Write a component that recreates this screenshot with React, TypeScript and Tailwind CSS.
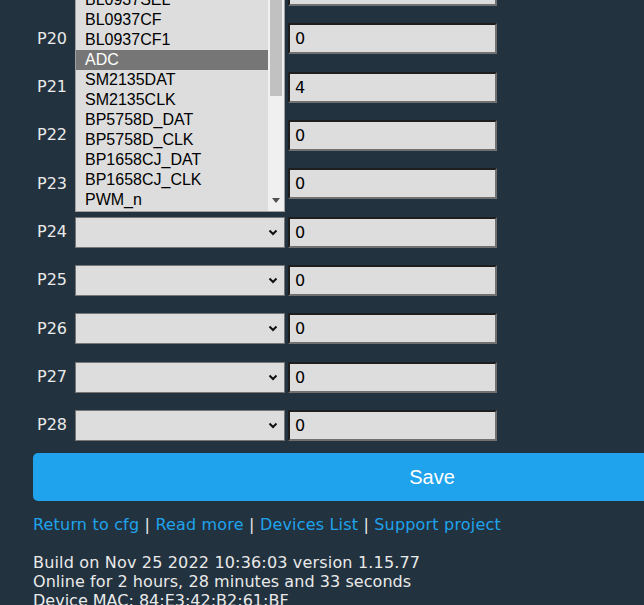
import { useState } from "react";

const pins = ["P19", "P20", "P21", "P22", "P23", "P24", "P25", "P26", "P27", "P28"];
const values: Record<string, string> = { P21: "4" };

const listItems = [
  "BL0937SEL",
  "BL0937CF",
  "BL0937CF1",
  "ADC",
  "SM2135DAT",
  "SM2135CLK",
  "BP5758D_DAT",
  "BP5758D_CLK",
  "BP1658CJ_DAT",
  "BP1658CJ_CLK",
  "PWM_n",
];

const tahoma = { fontFamily: '"DejaVu Sans", Verdana, sans-serif' };
const arial = { fontFamily: '"Liberation Sans", Arial, sans-serif' };

function PinRow({ pin, last }: { pin: string; last: boolean }) {
  const [val, setVal] = useState(values[pin] ?? "0");
  return (
    <div className={`flex h-[31px] items-center ${last ? "mb-[12px]" : "mb-[17.33px]"}`}>
      <span className="w-[34px] text-right text-[16px] text-[#eaeaea]" style={tahoma}>
        {pin}
      </span>
      <div className="relative ml-[8px] h-[31px] w-[210px] border border-[#767676] bg-[#dddddd]">
        <select className="h-full w-full appearance-none bg-transparent outline-none" />
        <svg
          className="pointer-events-none absolute right-[6px] top-[11px]"
          width="10"
          height="7"
          viewBox="0 0 10 7"
        >
          <path d="M1.5 1.5l3.5 3.5 3.5-3.5" fill="none" stroke="#111" strokeWidth="2" />
        </svg>
      </div>
      <input
        value={val}
        onChange={(e) => setVal(e.target.value)}
        className="ml-[3px] h-[31px] w-[209px] border-2 border-t-[#1e1e1e] border-l-[#1e1e1e] border-b-[#707070] border-r-[#707070] bg-[#dddddd] px-[5px] text-[16px] text-black outline-none"
        style={tahoma}
      />
    </div>
  );
}

function OpenList() {
  return (
    <div
      className="absolute left-[75px] top-[-11px] flex w-[210px] border border-[#a0a0a0] bg-[#dddddd]"
      style={arial}
    >
      <div className="flex-1 pb-px">
        {listItems.map((item) => (
          <div
            key={item}
            className={`h-[20px] pl-[9px] text-[16px] leading-[20px] ${
              item === "ADC" ? "bg-[#767676] text-white" : "text-black"
            }`}
          >
            {item}
          </div>
        ))}
      </div>
      <div className="relative w-[16px] bg-[#f0f0f0]">
        <div className="mx-auto h-[106px] w-[12px] bg-[#c1c1c1]" />
        <svg className="absolute bottom-[8px] left-[4px]" width="8" height="5" viewBox="0 0 8 5">
          <path d="M0 0h8L4 5z" fill="#505050" />
        </svg>
      </div>
    </div>
  );
}

export default function App() {
  return (
    <div className="relative h-[605px] w-[644px] overflow-hidden bg-[#22323f]">
      <div className="-mt-[25px] ml-[33px] w-[798px]">
        {pins.map((p, i) => (
          <PinRow key={p} pin={p} last={i === pins.length - 1} />
        ))}
        <button
          className="h-[48px] w-full rounded-[5px] bg-[#1fa3ec] text-[20px] text-white"
          style={arial}
        >
          Save
        </button>
        <div
          className="mt-[14px] text-[16px] leading-[19px] tracking-[0.18px] text-[#eaeaea]"
          style={tahoma}
        >
          <a className="text-[#1fa3ec]">Return to cfg</a> |{" "}
          <a className="text-[#1fa3ec]">Read more</a> |{" "}
          <a className="text-[#1fa3ec]">Devices List</a> |{" "}
          <a className="text-[#1fa3ec]">Support project</a>
        </div>
        <div className="mt-[19px] text-[16px] leading-[19px] text-[#eaeaea]" style={tahoma}>
          <div className="tracking-[0.17px]">Build on Nov 25 2022 10:36:03 version 1.15.77</div>
          <div className="tracking-[0.06px]">Online for 2 hours, 28 minutes and 33 seconds</div>
          <div>Device MAC: 84:E3:42:B2:61:BF</div>
        </div>
      </div>
      <OpenList />
    </div>
  );
}
